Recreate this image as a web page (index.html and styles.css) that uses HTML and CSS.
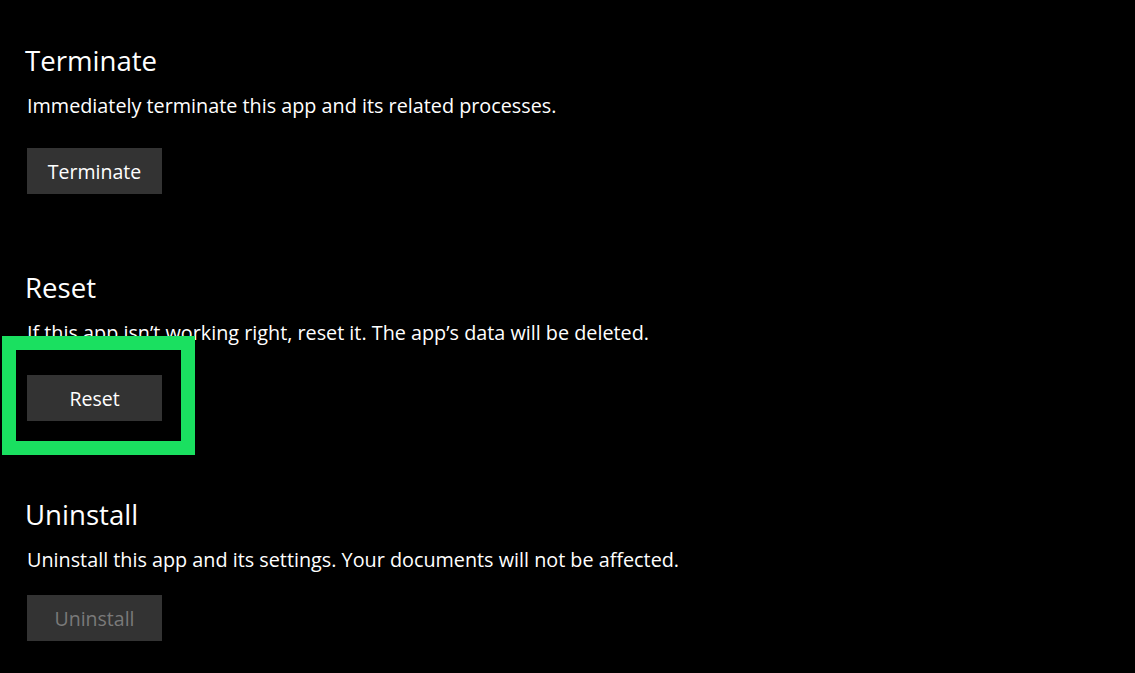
FILE: index.html
```html
<!DOCTYPE html>
<html lang="en">
<head>
<meta charset="utf-8">
<title>App options</title>
<link rel="stylesheet" href="styles.css">
</head>
<body>
<main class="page">
  <section class="section">
    <h2 class="section-title">Terminate</h2>
    <p class="section-desc">Immediately terminate this app and its related processes.</p>
    <div class="action"><button class="btn" type="button">Terminate</button></div>
  </section>
  <section class="section">
    <h2 class="section-title">Reset</h2>
    <p class="section-desc">If this app isn’t working right, reset it. The app’s data will be deleted.</p>
    <div class="action action--highlight"><button class="btn" type="button">Reset</button><span class="highlight"></span></div>
  </section>
  <section class="section section--last">
    <h2 class="section-title">Uninstall</h2>
    <p class="section-desc">Uninstall this app and its settings. Your documents will not be affected.</p>
    <div class="action"><button class="btn btn--disabled" type="button" disabled>Uninstall</button></div>
  </section>
</main>
</body>
</html>
```
FILE: styles.css
```css
html, body {
  margin: 0;
  padding: 0;
  background: #000;
}
body {
  font-family: "Open Sans", "Noto Sans", sans-serif;
  color: #fff;
  width: 1135px;
  height: 673px;
  overflow: hidden;
}
.page {
  padding: 40px 0 0 27px;
  display: flex;
  flex-direction: column;
  gap: 73px;
}
.section {
  display: flex;
  flex-direction: column;
}
.section-title {
  margin: 0 0 0 -2px;
  font-size: 27.6px;
  line-height: 40px;
  font-weight: 400;
}
.section-desc {
  margin: 12px 0 0;
  font-size: 19.8px;
  line-height: 28px;
  font-weight: 400;
}
.action {
  margin-top: 28px;
  align-self: flex-start;
  position: relative;
}
.section--last .action {
  margin-top: 21px;
}
.btn {
  display: block;
  width: 135px;
  height: 46px;
  border: 0;
  border-radius: 0;
  background: #333333;
  color: #fff;
  font-family: inherit;
  font-size: 19.5px;
  padding: 0;
}
.btn--disabled {
  color: #7a7a7a;
}
.highlight {
  position: absolute;
  left: -25px;
  top: -39px;
  width: 165px;
  height: 91px;
  border: 14px solid #1ae060;
  pointer-events: none;
}
```
